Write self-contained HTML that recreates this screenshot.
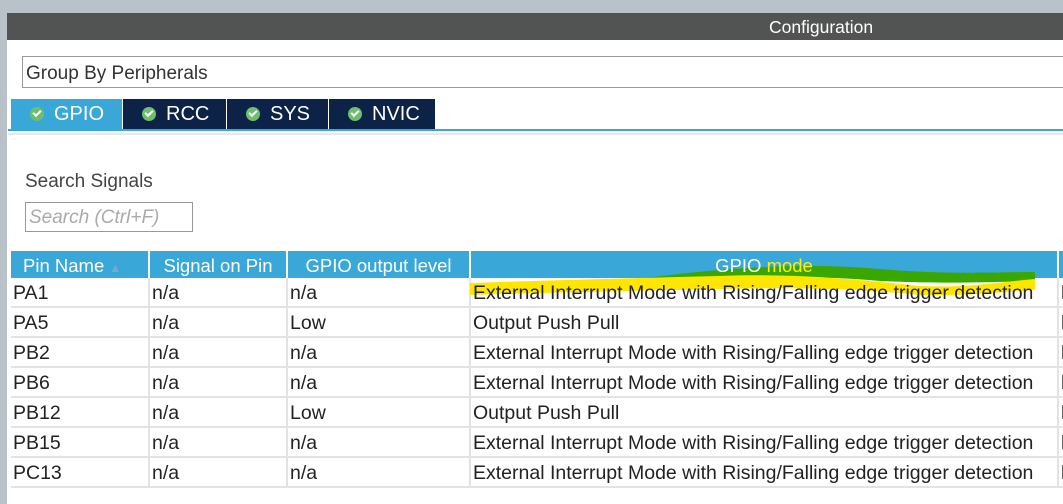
<!DOCTYPE html>
<html><head><style>
body{margin:0;width:1063px;height:504px;overflow:hidden;background:#fff;font-family:"Liberation Sans",sans-serif;position:relative}
.a{position:absolute}
.tab{position:absolute;top:99px;height:30px;color:#fff;font-size:20px;line-height:31px;background:#0c2347}
.tab i{display:inline-block;width:14px;height:14px;border-radius:50%;background:#6dbf6d;vertical-align:-1px;margin:0 10px 0 19px;position:relative}
.tab i:after{content:"";position:absolute;left:3px;top:3px;width:6px;height:3px;border-left:2px solid #fff;border-bottom:2px solid #fff;transform:rotate(-45deg)}
table{position:absolute;left:11px;top:251px;border-collapse:collapse;table-layout:fixed;width:1070px;font-size:19.5px;color:#222}
th{background:#3aa7d9;color:#fff;font-weight:normal;height:25px;padding:2px 0 0 0;border-right:2px solid #fff;text-align:left;font-size:18.5px;overflow:hidden;white-space:nowrap}
td{height:25px;padding:3px 0 0 2px;border-bottom:2px solid #e1e3e6;border-right:2px solid #e1e3e6;white-space:nowrap;overflow:hidden}
.z{position:relative;z-index:3}
svg{z-index:2}
</style></head><body>
<div class="a" style="left:0;top:0;width:1063px;height:13px;background:#b8c2c8"></div>
<div class="a" style="left:0;top:0;width:7px;height:504px;background:#b8c2c8"></div>
<div class="a" style="left:7px;top:13px;width:1056px;height:27px;background:#525453;color:#fff;font-size:17.5px;line-height:29px"><span style="position:absolute;left:762px">Configuration</span></div>
<div class="a" style="left:22px;top:56px;width:1050px;height:30px;border:1px solid #9a9a9a;font-size:19px;line-height:33px;color:#333;text-indent:3px">Group By Peripherals</div>
<div class="tab" style="left:11px;width:111px;background:#3aa7d9"><i></i>GPIO</div>
<div class="tab" style="left:123px;width:103px"><i></i>RCC</div>
<div class="tab" style="left:227px;width:101px"><i></i>SYS</div>
<div class="tab" style="left:329px;width:106px"><i></i>NVIC</div>
<div class="a" style="left:8px;top:129px;width:1055px;height:2px;background:#3aa7d9"></div>
<div class="a" style="left:8px;top:133px;width:1055px;height:2px;background:#e6e9ec"></div>
<div class="a" style="left:25px;top:171px;font-size:19px;color:#444">Search Signals</div>
<div class="a" style="left:25px;top:202px;width:166px;height:28px;border:1px solid #999;font-size:19px;font-style:italic;color:#aaa;line-height:30px;text-indent:3px">Search (Ctrl+F)</div>
<svg class="a" style="left:0;top:0" width="1063" height="504">
<path d="M630 280 C720 268 800 262 880 269 C950 275 1000 272 1035 272 L1035 281 C990 282 950 284 880 281 C800 274 720 276 630 283Z" fill="#3aa600"/>
<path d="M470 283 C560 280 640 278 720 276 C800 273 860 280 920 286 C970 288 1000 282 1035 279 L1035 290 C1000 292 970 296 920 295 C860 289 800 287 720 289 C640 291 560 292 470 295Z" fill="#ffe600"/>
</svg>
<table>
<colgroup><col style="width:138px"><col style="width:138px"><col style="width:183px"><col style="width:588px"><col style="width:23px"></colgroup>
<tr><th style="padding-left:12px">Pin Name <span style="color:#7aa9c8;font-size:12px">&#9650;</span></th><th style="text-align:center">Signal on Pin</th><th style="text-align:center">GPIO output level</th><th style="text-align:center"><span class="z">GPIO <span style="color:#ffef00">mode</span></span></th><th></th></tr>
<tr><td>PA1</td><td>n/a</td><td>n/a</td><td><span class="z">External Interrupt Mode with Rising/Falling edge trigger detection</span></td><td>l</td></tr>
<tr><td>PA5</td><td>n/a</td><td>Low</td><td>Output Push Pull</td><td>l</td></tr>
<tr><td>PB2</td><td>n/a</td><td>n/a</td><td>External Interrupt Mode with Rising/Falling edge trigger detection</td><td>l</td></tr>
<tr><td>PB6</td><td>n/a</td><td>n/a</td><td>External Interrupt Mode with Rising/Falling edge trigger detection</td><td>l</td></tr>
<tr><td>PB12</td><td>n/a</td><td>Low</td><td>Output Push Pull</td><td>l</td></tr>
<tr><td>PB15</td><td>n/a</td><td>n/a</td><td>External Interrupt Mode with Rising/Falling edge trigger detection</td><td>l</td></tr>
<tr><td>PC13</td><td>n/a</td><td>n/a</td><td>External Interrupt Mode with Rising/Falling edge trigger detection</td><td>l</td></tr>
</table>
</body></html>
